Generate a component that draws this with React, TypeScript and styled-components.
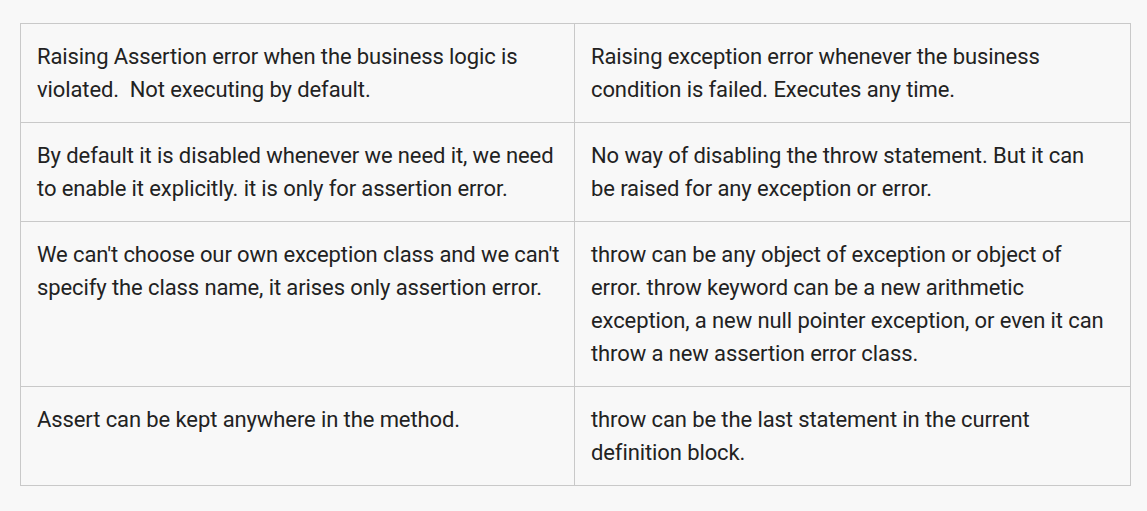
import React from "react";
import styled, { createGlobalStyle } from "styled-components";

const Global = createGlobalStyle`
  html, body { margin: 0; padding: 0; background: #f8f8f8; }
  body { font-family: Roboto, "Liberation Sans", sans-serif; }
`;

const Page = styled.div`
  padding: 23px 17px 0 20px;
  width: 1147px;
  box-sizing: border-box;
`;

const Table = styled.table`
  width: 1110px;
  border-collapse: collapse;
  table-layout: fixed;
  border: 1px solid #c9c9c9;
`;

const Col = styled.col<{ $w: number }>`
  width: ${(p) => p.$w}px;
`;

const Cell = styled.td<{ $padRight: number }>`
  border: 1px solid #c9c9c9;
  padding: 16px ${(p) => p.$padRight}px 16px 16px;
  vertical-align: top;
  font-size: 22px;
  line-height: 33px;
  letter-spacing: -0.1px;
  color: #222;
`;

const rows: [string, string][] = [
  [
    "Raising Assertion error when the business logic is violated.\u00a0 Not executing by default.",
    "Raising exception error whenever the business condition is failed. Executes any time.",
  ],
  [
    "By default it is disabled whenever we need it, we need to enable it explicitly. it is only for assertion error.",
    "No way of disabling the throw statement. But it can be raised for any exception or error.",
  ],
  [
    "We can't choose our own exception class and we can't specify the class name, it arises only assertion error.",
    "throw can be any object of exception or object of error. throw keyword can be a new arithmetic exception, a new null pointer exception, or even it can throw a new assertion error class.",
  ],
  [
    "Assert can be kept anywhere in the method.",
    "throw can be the last statement in the current definition block.",
  ],
];

export default function App() {
  return (
    <>
      <Global />
      <Page>
        <Table>
          <colgroup>
            <Col $w={554} />
            <Col $w={556} />
          </colgroup>
          <tbody>
            {rows.map((r, i) => (
              <tr key={i}>
                <Cell $padRight={14}>{r[0]}</Cell>
                <Cell $padRight={19}>{r[1]}</Cell>
              </tr>
            ))}
          </tbody>
        </Table>
      </Page>
    </>
  );
}
